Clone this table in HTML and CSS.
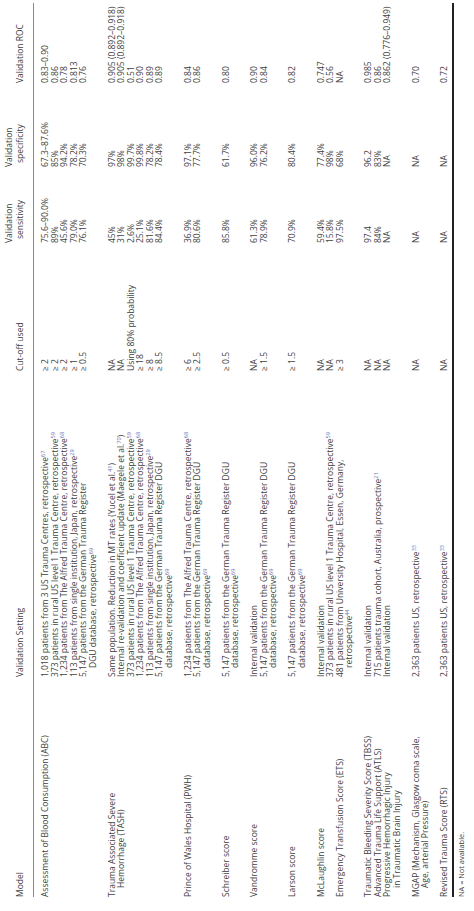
FILE: index.html
```html
<!DOCTYPE html>
<html lang="en">
<head>
<meta charset="utf-8">
<title>Validation of massive transfusion prediction scores</title>
<link rel="stylesheet" href="styles.css">
</head>
<body>
<div class="frame">
<div class="page">
  <table class="tbl">
    <colgroup>
      <col class="c-model"><col class="c-set"><col class="c-cut"><col class="c-sens"><col class="c-spec"><col class="c-roc">
    </colgroup>
    <thead>
      <tr>
        <th>Model</th>
        <th>Validation Setting</th>
        <th>Cut-off used</th>
        <th><span class="l">Validation</span><span class="l hs">sensitivity</span></th>
        <th><span class="l">Validation</span><span class="l hs">specificity</span></th>
        <th>Validation ROC</th>
      </tr>
    </thead>
    <tbody>
      <tr class="first">
        <td rowspan="5">Assessment of Blood Consumption (ABC)</td>
        <td>1,018 patients from 3 US Trauma Centres, retrospective<sup>67</sup></td>
        <td>≥ 2</td><td>75.6–90.0%</td><td>67.3–87.6%</td><td>0.83–0.90</td>
      </tr>
      <tr><td>373 patients in rural US level 1 Trauma Centre, retrospective<sup>59</sup></td><td>≥ 2</td><td>89%</td><td>85%</td><td>0.86</td></tr>
      <tr><td>1,234 patients from The Alfred Trauma Centre, retrospective<sup>68</sup></td><td>≥ 2</td><td>45.6%</td><td>94.2%</td><td>0.78</td></tr>
      <tr><td>113 patients from single institution, Japan, retrospective<sup>29</sup></td><td>≥ 1</td><td>79.0%</td><td>78.2%</td><td>0.813</td></tr>
      <tr><td><span class="l">5,147 patients from the German Trauma Register</span><span class="l ind">DGU database, retrospective<sup>69</sup></span></td><td>≥ 0.5</td><td>76.1%</td><td>70.3%</td><td>0.76</td></tr>

      <tr class="grp">
        <td rowspan="6"><span class="l">Trauma Associated Severe</span><span class="l ind">Hemorrhage (TASH)</span></td>
        <td>Same population. Reduction in MT rates (Yucel et al.<sup>41</sup>)</td>
        <td>NA</td><td>45%</td><td>97%</td><td>0.905 (0.892–0.918)</td>
      </tr>
      <tr><td>Internal re-validation and coefficient update (Maegele et al.<sup>70</sup>)</td><td>NA</td><td>31%</td><td>98%</td><td>0.905 (0.892–0.918)</td></tr>
      <tr><td>373 patients in rural US level 1 Trauma Centre, retrospective<sup>59</sup></td><td>Using 80% probability</td><td>2.6%</td><td>99.7%</td><td>0.51</td></tr>
      <tr><td>1,234 patients from The Alfred Trauma Centre, retrospective<sup>68</sup></td><td>≥ 18</td><td>25.1%</td><td>99.8%</td><td>0.90</td></tr>
      <tr><td>113 patients from single institution, Japan, retrospective<sup>29</sup></td><td>≥ 8</td><td>81.6%</td><td>78.2%</td><td>0.89</td></tr>
      <tr><td><span class="l">5,147 patients from the German Trauma Register DGU</span><span class="l ind">database, retrospective<sup>69</sup></span></td><td>≥ 8.5</td><td>84.4%</td><td>78.4%</td><td>0.89</td></tr>

      <tr class="grp">
        <td rowspan="2">Prince of Wales Hospital (PWH)</td>
        <td>1,234 patients from The Alfred Trauma Centre, retrospective<sup>68</sup></td>
        <td>≥ 6</td><td>36.9%</td><td>97.1%</td><td>0.84</td>
      </tr>
      <tr><td><span class="l">5,147 patients from the German Trauma Register DGU</span><span class="l ind">database, retrospective<sup>69</sup></span></td><td>≥ 2.5</td><td>80.6%</td><td>77.7%</td><td>0.86</td></tr>

      <tr class="grp">
        <td>Schreiber score</td>
        <td><span class="l">5,147 patients from the German Trauma Register DGU</span><span class="l ind">database, retrospective<sup>69</sup></span></td>
        <td>≥ 0.5</td><td>85.8%</td><td>61.7%</td><td>0.80</td>
      </tr>

      <tr class="grp">
        <td rowspan="2">Vandromme score</td>
        <td>Internal validation</td>
        <td>NA</td><td>61.3%</td><td>96.0%</td><td>0.90</td>
      </tr>
      <tr><td><span class="l">5,147 patients from the German Trauma Register DGU</span><span class="l ind">database, retrospective<sup>69</sup></span></td><td>≥ 1.5</td><td>78.9%</td><td>76.2%</td><td>0.84</td></tr>

      <tr class="grp">
        <td>Larson score</td>
        <td><span class="l">5,147 patients from the German Trauma Register DGU</span><span class="l ind">database, retrospective<sup>69</sup></span></td>
        <td>≥ 1.5</td><td>70.9%</td><td>80.4%</td><td>0.82</td>
      </tr>

      <tr class="grp">
        <td rowspan="2">McLaughlin score</td>
        <td>Internal validation</td>
        <td>NA</td><td>59.4%</td><td>77.4%</td><td>0.747</td>
      </tr>
      <tr><td>373 patients in rural US level 1 Trauma Centre, retrospective<sup>59</sup></td><td>NA</td><td>15.8%</td><td>98%</td><td>0.56</td></tr>
      <tr>
        <td>Emergency Transfusion Score (ETS)</td>
        <td><span class="l">481 patients from University Hospital, Essen, Germany,</span><span class="l ind">retrospective<sup>44</sup></span></td>
        <td>≥ 3</td><td>97.5%</td><td>68%</td><td>NA</td>
      </tr>

      <tr class="grp">
        <td>Traumatic Bleeding Severity Score (TBSS)</td>
        <td>Internal validation</td>
        <td>NA</td><td>97.4</td><td>96.2</td><td>0.985</td>
      </tr>
      <tr>
        <td>Advanced Trauma Life Support (ATLS)</td>
        <td>715 patients trauma cohort, Australia, prospective<sup>21</sup></td>
        <td>NA</td><td>84%</td><td>83%</td><td>0.86</td>
      </tr>
      <tr>
        <td><span class="l">Progressive Hemorrhagic Injury</span><span class="l ind">in Traumatic Brain Injury</span></td>
        <td>Internal validation</td>
        <td>NA</td><td>NA</td><td>NA</td><td>0.862 (0.776–0.949)</td>
      </tr>

      <tr class="grp">
        <td><span class="l">MGAP (Mechanism, Glasgow coma scale,</span><span class="l ind">Age, arterial Pressure)</span></td>
        <td>2,363 patients US, retrospective<sup>33</sup></td>
        <td>NA</td><td>NA</td><td>NA</td><td>0.70</td>
      </tr>

      <tr class="grp last">
        <td>Revised Trauma Score (RTS)</td>
        <td>2,363 patients US, retrospective<sup>33</sup></td>
        <td>NA</td><td>NA</td><td>NA</td><td>0.72</td>
      </tr>
    </tbody>
  </table>
  <p class="note">NA = Not available.</p>
</div>
</div>
</body>
</html>
```

FILE: styles.css
```css
html, body {
  margin: 0;
  padding: 0;
  background: #ffffff;
}

.frame {
  width: 474px;
  height: 911px;
  overflow: hidden;
}

.page {
  width: 911px;
  height: 474px;
  box-sizing: border-box;
  padding: 3px 0 0 14px;
  transform-origin: 0 0;
  transform: translateY(911px) rotate(-90deg);
  font-family: "Open Sans", "Noto Sans", "DejaVu Sans", sans-serif;
  font-size: 8.5px;
  line-height: 9.5px;
  color: #404040;
}

.tbl {
  width: 894px;
  border-collapse: collapse;
  table-layout: fixed;
}

.c-model { width: 220px; }
.c-set { width: 306px; }
.c-cut { width: 128px; }
.c-sens { width: 76px; }
.c-spec { width: 84px; }
.c-roc { width: 80px; }

.tbl th {
  font-weight: 400;
  text-align: left;
  vertical-align: bottom;
  line-height: 11px;
  padding: 0 0 8px 0;
  border-bottom: 1px solid #8a8a8a;
  white-space: nowrap;
}

.tbl td {
  padding: 0;
  vertical-align: top;
  white-space: nowrap;
}

.tbl .first td {
  padding-top: 6px;
}

.tbl .grp td {
  padding-top: 9.5px;
}

.tbl .last td {
  padding-bottom: 3px;
  border-bottom: 2px solid #222222;
}

.l {
  display: block;
}

.hs {
  padding-left: 4px;
}

.ind {
  padding-left: 9px;
}

sup {
  font-size: 5.6px;
  line-height: 0;
  vertical-align: 3.5px;
  color: #6a6fb5;
}

.note {
  margin: 3px 0 0 0;
  font-size: 7.4px;
  line-height: 9px;
}
```
